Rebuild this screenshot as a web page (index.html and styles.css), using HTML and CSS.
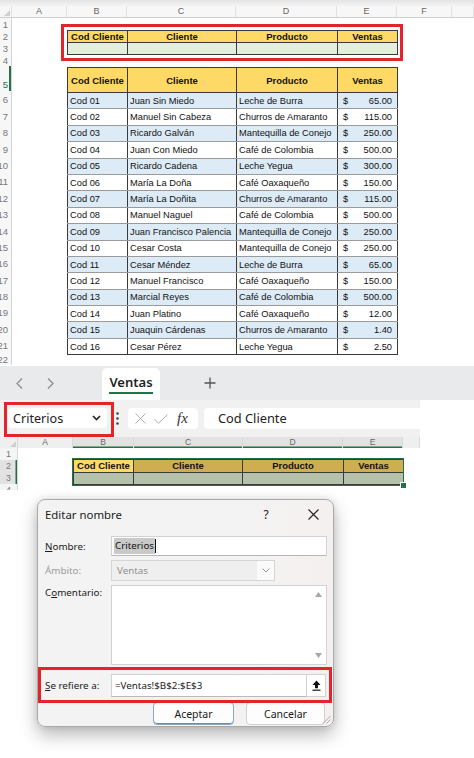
FILE: index.html
```html
<!DOCTYPE html>
<html lang="es">
<head>
<meta charset="utf-8">
<title>Editar nombre</title>
<link rel="stylesheet" href="styles.css">
</head>
<body>
<div class="sheet1">
  <div class="topstrip"></div>
  <div class="colhdr">
    <div class="corner"><span class="tri"></span></div>
    <div>A</div><div>B</div><div>C</div><div>D</div><div>E</div><div>F</div><div></div>
  </div>
  <div class="body1">
    <div class="rownums">
      <div class="rn s">1</div><div class="rn s">2</div><div class="rn s">3</div><div class="rn s">4</div>
      <div class="rn h sel">5</div>
      <div class="rn d">6</div><div class="rn d">7</div><div class="rn d">8</div><div class="rn d">9</div>
      <div class="rn d">10</div><div class="rn d">11</div><div class="rn d">12</div><div class="rn d">13</div>
      <div class="rn d">14</div><div class="rn d">15</div><div class="rn d">16</div><div class="rn d">17</div>
      <div class="rn d">18</div><div class="rn d">19</div><div class="rn d">20</div><div class="rn d">21</div>
      <div class="rn s">22</div>
    </div>
    <div class="content1">
      <div class="crit">
        <table class="t mini">
          <colgroup><col class="cb"><col class="cc"><col class="cd"><col class="ce"></colgroup>
          <tr class="hr"><th>Cod Cliente</th><th>Cliente</th><th>Producto</th><th>Ventas</th></tr>
          <tr class="gr"><td></td><td></td><td></td><td></td></tr>
        </table>
      </div>
      <table class="t main">
        <colgroup><col class="cb"><col class="cc"><col class="cd"><col class="ce"></colgroup>
        <tr class="hr"><th>Cod Cliente</th><th>Cliente</th><th>Producto</th><th>Ventas</th></tr>
        <tr class="b"><td>Cod 01</td><td>Juan Sin Miedo</td><td>Leche de Burra</td><td class="m"><span class="cur">$</span>65.00</td></tr>
        <tr><td>Cod 02</td><td>Manuel Sin Cabeza</td><td>Churros de Amaranto</td><td class="m"><span class="cur">$</span>115.00</td></tr>
        <tr class="b"><td>Cod 03</td><td>Ricardo Galván</td><td>Mantequilla de Conejo</td><td class="m"><span class="cur">$</span>250.00</td></tr>
        <tr><td>Cod 04</td><td>Juan Con Miedo</td><td>Café de Colombia</td><td class="m"><span class="cur">$</span>500.00</td></tr>
        <tr class="b"><td>Cod 05</td><td>Ricardo Cadena</td><td>Leche Yegua</td><td class="m"><span class="cur">$</span>300.00</td></tr>
        <tr><td>Cod 06</td><td>María La Doña</td><td>Café Oaxaqueño</td><td class="m"><span class="cur">$</span>150.00</td></tr>
        <tr class="b"><td>Cod 07</td><td>María La Doñita</td><td>Churros de Amaranto</td><td class="m"><span class="cur">$</span>115.00</td></tr>
        <tr><td>Cod 08</td><td>Manuel Naguel</td><td>Café de Colombia</td><td class="m"><span class="cur">$</span>500.00</td></tr>
        <tr class="b"><td>Cod 09</td><td>Juan Francisco Palencia</td><td>Mantequilla de Conejo</td><td class="m"><span class="cur">$</span>250.00</td></tr>
        <tr><td>Cod 10</td><td>Cesar Costa</td><td>Mantequilla de Conejo</td><td class="m"><span class="cur">$</span>250.00</td></tr>
        <tr class="b"><td>Cod 11</td><td>Cesar Méndez</td><td>Leche de Burra</td><td class="m"><span class="cur">$</span>65.00</td></tr>
        <tr><td>Cod 12</td><td>Manuel Francisco</td><td>Café Oaxaqueño</td><td class="m"><span class="cur">$</span>150.00</td></tr>
        <tr class="b"><td>Cod 13</td><td>Marcial Reyes</td><td>Café de Colombia</td><td class="m"><span class="cur">$</span>500.00</td></tr>
        <tr><td>Cod 14</td><td>Juan Platino</td><td>Café Oaxaqueño</td><td class="m"><span class="cur">$</span>12.00</td></tr>
        <tr class="b"><td>Cod 15</td><td>Juaquin Cárdenas</td><td>Churros de Amaranto</td><td class="m"><span class="cur">$</span>1.40</td></tr>
        <tr class="last"><td>Cod 16</td><td>Cesar Pérez</td><td>Leche Yegua</td><td class="m"><span class="cur">$</span>2.50</td></tr>
      </table>
    </div>
  </div>
</div>

<div class="tabbar">
  <span class="nav"><svg width="7" height="11" viewBox="0 0 7 11"><polyline points="6,0.5 1,5.5 6,10.5" fill="none" stroke="#8a8a8a" stroke-width="1.2"/></svg></span>
  <span class="nav"><svg width="7" height="11" viewBox="0 0 7 11"><polyline points="1,0.5 6,5.5 1,10.5" fill="none" stroke="#8a8a8a" stroke-width="1.2"/></svg></span>
  <span class="tab"><span class="tabtxt">Ventas</span></span>
  <span class="plus"><svg width="12" height="12" viewBox="0 0 12 12"><path d="M6 0.5V11.5M0.5 6H11.5" stroke="#555" stroke-width="1.3"/></svg></span>
</div>

<div class="fbar">
  <span class="namewrap">
    <span class="namebox">Criterios<svg class="chev" width="9" height="6" viewBox="0 0 9 6"><polyline points="1,1 4.5,4.5 8,1" fill="none" stroke="#222" stroke-width="1.6"/></svg></span>
  </span>
  <span class="dots"><svg width="3" height="13" viewBox="0 0 3 13"><circle cx="1.5" cy="1.5" r="1.3" fill="#444"/><circle cx="1.5" cy="6.5" r="1.3" fill="#444"/><circle cx="1.5" cy="11.5" r="1.3" fill="#444"/></svg></span>
  <span class="funcbox">
    <svg class="ix" width="11" height="11" viewBox="0 0 11 11"><path d="M0.5 0.5L10.5 10.5M10.5 0.5L0.5 10.5" stroke="#b0b0b0" stroke-width="1"/></svg>
    <svg class="ick" width="14" height="10" viewBox="0 0 14 10"><polyline points="0.5,5 4.5,9.3 13.5,0.5" fill="none" stroke="#b0b0b0" stroke-width="1"/></svg>
    <span class="fx">fx</span>
  </span>
  <span class="formula">Cod Cliente</span>
</div>

<div class="grid2">
  <div class="colhdr2">
    <div class="corner2"><span class="tri"></span></div>
    <div>A</div><div class="on">B</div><div class="on">C</div><div class="on">D</div><div class="on">E</div><div></div>
  </div>
  <div class="body2">
    <div class="rownums2">
      <div class="rn2">1</div><div class="rn2 sel2">2</div><div class="rn2 sel2">3</div><div class="rn2">4</div>
    </div>
    <div class="content2">
      <div class="selbox">
        <table class="t2">
          <colgroup><col class="cb"><col class="cc"><col class="cd"><col class="ce"></colgroup>
          <tr class="h2"><th class="act">Cod Cliente</th><th>Cliente</th><th>Producto</th><th>Ventas</th></tr>
          <tr class="g2"><td></td><td></td><td></td><td></td></tr>
        </table>
      </div>
    </div>
  </div>
</div>

<div class="dlgwrap">
  <div class="dlg">
    <div class="dtitle">
      <span class="ttl">Editar nombre</span>
      <span class="help">?</span>
      <span class="close"><svg width="11" height="11" viewBox="0 0 11 11"><path d="M0.5 0.5L10.5 10.5M10.5 0.5L0.5 10.5" stroke="#222" stroke-width="1.1"/></svg></span>
    </div>
    <div class="row r1">
      <span class="lbl"><u>N</u>ombre:</span>
      <span class="inp name"><span class="seltext">Criterios</span><span class="caret"></span></span>
    </div>
    <div class="row r2">
      <span class="lbl dis">Ámbito:</span>
      <span class="select"><span class="seltxt">Ventas</span><span class="sbtn"><svg width="8" height="5" viewBox="0 0 8 5"><polyline points="0.5,0.5 4,4 7.5,0.5" fill="none" stroke="#8a8a8a" stroke-width="0.9"/></svg></span></span>
    </div>
    <div class="row r3">
      <span class="lbl">C<u>o</u>mentario:</span>
      <span class="tarea"><span class="scroll"><svg width="7" height="5" viewBox="0 0 7 5"><polygon points="3.5,0 7,5 0,5" fill="#a8a8a8"/></svg><svg width="7" height="5" viewBox="0 0 7 5"><polygon points="0,0 7,0 3.5,5" fill="#a8a8a8"/></svg></span></span>
    </div>
    <div class="row r4">
      <span class="lbl"><u>S</u>e refiere a:</span>
      <span class="inp ref">=Ventas!$B$2:$E$3</span>
      <span class="refbtn"><svg width="9" height="11" viewBox="0 0 9 11"><path d="M4.5 0.5L8.5 5H6V8.3H3V5H0.5Z" fill="#111"/><path d="M0.5 10.2H8.5" stroke="#111" stroke-width="1.2"/></svg></span>
    </div>
    <div class="row r5">
      <span class="btn ok">Aceptar</span>
      <span class="btn">Cancelar</span>
    </div>
    <svg class="grip" width="9" height="9" viewBox="0 0 9 9"><path d="M8.5 1L1 8.5M8.5 4.5L4.5 8.5" stroke="#9a9a9a" stroke-width="0.8"/></svg>
  </div>
</div>
</body>
</html>
```

FILE: styles.css
```css
* { box-sizing: border-box; }
html, body { margin: 0; padding: 0; }
body {
  width: 474px;
  height: 758px;
  overflow: hidden;
  background: #fff;
  font-family: "Liberation Sans", Arial, sans-serif;
  color: #111;
}

/* ---------- top sheet ---------- */
.sheet1 { height: 366px; overflow: hidden; }
.topstrip { height: 6px; background: linear-gradient(#e4e4e4, #f3f3f3); }
.colhdr {
  display: grid;
  grid-template-columns: 12px 55px 60px 109px 101px 60px 55px 1fr;
  height: 12px;
  background: #f7f7f7;
  border-bottom: 1px solid #cfcfcf;
  font-size: 9px;
  color: #666;
}
.colhdr > div {
  text-align: center;
  line-height: 11px;
  border-right: 1px solid #e2e2e2;
}
.corner, .corner2 { position: relative; }
.tri {
  position: absolute;
  right: 1px;
  bottom: 1px;
  width: 0;
  height: 0;
  border-left: 6px solid transparent;
  border-bottom: 6px solid #cfcfcf;
}
.body1 { display: flex; }
.rownums {
  width: 12px;
  flex: none;
  background: #f7f7f7;
  border-right: 1px solid #d6d6d6;
  overflow: hidden;
}
.rn {
  display: flex;
  justify-content: flex-end;
  align-items: flex-end;
  padding-right: 3px;
  font-size: 9.5px;
  line-height: 10px;
  color: #777;
  white-space: nowrap;
  overflow: hidden;
}
.rn.s { height: 12px; }
.rn.h { height: 25px; padding-bottom: 1px; }
.rn.d { height: 16.4px; padding-bottom: 2px; }
.rn.sel { color: #217346; box-shadow: inset -2px 0 #217346; }

.content1 { flex: 1; padding-left: 55px; }
.crit {
  margin-top: 12px;
  width: 330px;
  outline: 3px solid #e3242b;
  outline-offset: 3px;
}
.t {
  border-collapse: collapse;
  table-layout: fixed;
  width: 330px;
}
.cb { width: 60px; }
.cc { width: 109px; }
.cd { width: 101px; }
.ce { width: 60px; }
.t th, .t td {
  padding: 0 2px;
  white-space: nowrap;
  overflow: hidden;
  font-size: 9.3px;
  color: #111;
  border-left: 1px solid #3a3a3a;
  border-right: 1px solid #3a3a3a;
  border-top: 1px solid #9a9a9a;
  border-bottom: 1px solid #9a9a9a;
}
.t th {
  font-size: 9.5px;
  font-weight: bold;
  text-align: center;
  background: #ffd966;
  border-top: 1px solid #3a3a3a;
  border-bottom: 1px solid #3a3a3a;
}
.mini .hr th { height: 12px; line-height: 10px; }
.mini .gr td {
  height: 12px;
  background: #e2efda;
  border-bottom: 1px solid #3a3a3a;
}
.main { margin-top: 12px; }
.main .hr th { height: 25px; }
.main td { height: 16.4px; line-height: 12px; background: #fff; }
.main tr.b td { background: #ddebf7; }
.main tr.last td { border-bottom: 1px solid #3a3a3a; }
.main td.m { text-align: right; padding: 0 5px 0 5px; }
.cur { float: left; }

/* ---------- tab bar ---------- */
.tabbar {
  height: 34px;
  background: #e9eaec;
  display: flex;
  align-items: flex-start;
  padding-left: 4px;
  font-family: "Noto Sans", "Open Sans", sans-serif;
}
.nav {
  width: 31px;
  height: 34px;
  display: flex;
  align-items: center;
  justify-content: center;
}
.tab {
  margin-left: 36px;
  margin-top: 2px;
  width: 58px;
  height: 32px;
  background: #fff;
  border-radius: 5px 5px 0 0;
  display: flex;
  justify-content: center;
  padding-top: 5px;
}
.tabtxt {
  display: inline-block;
  height: 21px;
  font-size: 13px;
  font-weight: 600;
  line-height: 18px;
  color: #1f1f1f;
  border-bottom: 2px solid #217346;
}
.plus {
  margin-left: 40px;
  width: 20px;
  height: 34px;
  display: flex;
  align-items: center;
  justify-content: center;
}

/* ---------- formula bar ---------- */
.fbar {
  width: 420px;
  height: 37px;
  background: #f1f1f1;
  display: flex;
  align-items: flex-start;
  padding-left: 7px;
  font-family: "Noto Sans", "Open Sans", sans-serif;
}
.namewrap {
  margin-top: 5px;
  width: 104px;
  height: 29px;
  padding: 3px 4px 6px 1px;
  outline: 3px solid #e3242b;
}
.namebox {
  display: flex;
  align-items: center;
  justify-content: space-between;
  height: 20px;
  background: #fff;
  border-radius: 4px;
  padding: 0 6px 0 5px;
  font-size: 12.6px;
  color: #222;
}
.dots {
  width: 12px;
  margin-top: 12px;
  display: flex;
  justify-content: center;
}
.funcbox {
  margin-top: 8px;
  margin-left: 5px;
  width: 70px;
  height: 21px;
  background: #fff;
  border-radius: 4px;
  display: flex;
  align-items: center;
  padding-left: 7px;
}
.ick { margin-left: 8px; }
.fx {
  margin-left: 9px;
  font-family: "Liberation Serif", serif;
  font-style: italic;
  font-size: 15px;
  color: #333;
  line-height: 21px;
}
.formula {
  margin-top: 8px;
  margin-left: 6px;
  flex: 1;
  height: 21px;
  background: #fff;
  border-radius: 4px 0 0 4px;
  padding-left: 14px;
  font-size: 12.8px;
  line-height: 21px;
  color: #222;
}

/* ---------- second grid ---------- */
.grid2 { height: 53px; overflow: hidden; }
.colhdr2 {
  width: 420px;
  height: 11px;
  display: grid;
  grid-template-columns: 18px 55px 61px 109px 100px 60px 17px;
  background: #efefef;
  font-size: 8.5px;
  color: #666;
}
.colhdr2 > div {
  text-align: center;
  line-height: 11px;
  border-right: 1px solid #dadada;
}
.colhdr2 > div.on {
  background: #e2e2e2;
  box-shadow: inset 0 -1.5px #217346;
}
.body2 { display: flex; }
.rownums2 {
  width: 18px;
  flex: none;
  background: #f5f5f5;
  border-right: 1px solid #d6d6d6;
}
.rn2 {
  height: 12px;
  font-size: 9px;
  line-height: 12px;
  color: #777;
  text-align: center;
}
.rn2.sel2 { background: #e2e2e2; box-shadow: inset -1.5px 0 #217346; }
.content2 { padding-left: 55px; padding-top: 11px; }
.selbox {
  position: relative;
  width: 330px;
  outline: 1.5px solid #217346;
}
.selbox::after {
  content: "";
  position: absolute;
  right: -4px;
  bottom: -4px;
  width: 5px;
  height: 5px;
  background: #217346;
  border: 1px solid #fff;
}
.t2 {
  border-collapse: collapse;
  table-layout: fixed;
  width: 330px;
}
.t2 th, .t2 td {
  border: 1px solid #3a3a3a;
  padding: 0;
}
.t2 th {
  height: 13px;
  font-size: 9.5px;
  line-height: 10px;
  font-weight: bold;
  color: #111;
  background: #cfae52;
}
.t2 th.act { background: #ffd966; }
.t2 td { height: 12px; background: #b5c1aa; }

/* ---------- dialog ---------- */
.dlgwrap { padding: 9px 0 0 37px; }
.dlg {
  position: relative;
  width: 297px;
  height: 228px;
  border: 1px solid #a9a9a9;
  border-radius: 8px;
  background: linear-gradient(100deg, #f3f3f3 55%, #f6efef 100%);
  box-shadow: 0 8px 18px rgba(0, 0, 0, 0.28), 0 0 7px rgba(0, 0, 0, 0.1);
  padding: 0 6px 0 7px;
  font-family: "Noto Sans", "Open Sans", sans-serif;
  font-size: 9.8px;
  color: #1a1a1a;
}
.dtitle {
  height: 28px;
  display: flex;
  align-items: center;
}
.ttl { flex: 1; font-size: 11.4px; color: #1a1a1a; }
.help { width: 20px; text-align: center; font-size: 12px; }
.close {
  width: 20px;
  margin-left: 27px;
  margin-right: 4px;
  display: flex;
  justify-content: center;
}
.row { display: flex; align-items: center; }
.lbl { width: 66px; flex: none; white-space: nowrap; }
.lbl.dis { color: #9b9b9b; }
.r1 { margin-top: 8px; height: 20px; }
.inp {
  height: 20px;
  background: #fff;
  border: 1px solid #d2d2d2;
  border-bottom-color: #b8b8b8;
  display: flex;
  align-items: center;
  padding-left: 2px;
}
.inp.name { width: 216px; }
.seltext { background: #c9c9c9; color: #111; padding: 0 1px; line-height: 16px; }
.caret { width: 1px; height: 14px; background: #111; }
.r2 { margin-top: 4px; height: 21px; }
.select {
  width: 164px;
  height: 21px;
  border: 1px solid #d6d6d6;
  background: #efefef;
  display: flex;
  align-items: center;
  justify-content: space-between;
  padding-left: 5px;
  color: #8f8f8f;
}
.sbtn {
  width: 17px;
  height: 19px;
  background: #fafafa;
  display: flex;
  align-items: center;
  justify-content: center;
}
.r3 { margin-top: 4px; height: 80px; align-items: flex-start; }
.r3 .lbl { margin-top: 1px; }
.tarea {
  width: 216px;
  height: 80px;
  background: #fff;
  border: 1px solid #d2d2d2;
  display: flex;
  justify-content: flex-end;
}
.scroll {
  width: 15px;
  display: flex;
  flex-direction: column;
  justify-content: space-between;
  align-items: center;
  padding: 6px 0 6px;
}
.r4 {
  margin: 5px -2px 0 -4px;
  height: 30px;
  padding: 3px 0 3px 4px;
  outline: 3px solid #e3242b;
}
.inp.ref {
  width: 196px;
  height: 23px;
  padding-left: 3px;
  color: #1a1a1a;
}
.refbtn {
  width: 19px;
  height: 23px;
  background: #fff;
  border: 1px solid #d2d2d2;
  border-left: none;
  display: flex;
  align-items: center;
  justify-content: center;
}
.r5 { margin-top: 2px; justify-content: flex-end; padding-right: 2px; }
.btn {
  width: 79px;
  height: 23px;
  border: 1px solid #d0d0d0;
  border-radius: 4px;
  background: #fdfdfd;
  display: flex;
  align-items: center;
  justify-content: center;
  font-size: 10.5px;
}
.btn.ok {
  width: 81px;
  margin-right: 12px;
  border-color: #8fa9bf;
  box-shadow: inset 0 -1px #6c8aa6;
}
.grip { position: absolute; right: 2px; bottom: 2px; }
```
